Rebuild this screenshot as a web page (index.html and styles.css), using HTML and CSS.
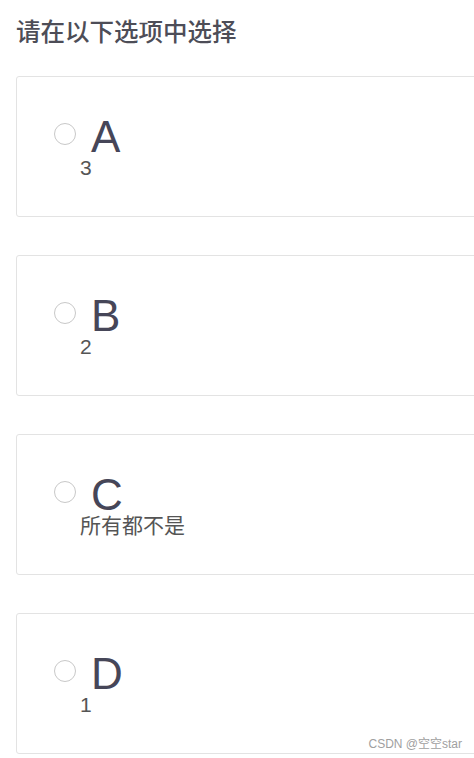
FILE: index.html
```html
<!DOCTYPE html>
<html lang="zh">
<head>
  <meta charset="UTF-8" />
  <meta name="viewport" content="width=device-width, initial-scale=1.0" />
  <title>选择</title>
  <link rel="stylesheet" href="styles.css">
</head>
<body>

  <h2 class="titolo">请在以下选项中选择</h2>

  <div class="lista">
    <label class="opzione">
      <div class="riga">
        <span class="radio"></span>
        <span class="lettera">A</span>
      </div>
      <div class="testo">3</div>
    </label>

    <label class="opzione">
      <div class="riga">
        <span class="radio"></span>
        <span class="lettera">B</span>
      </div>
      <div class="testo">2</div>
    </label>

    <label class="opzione">
      <div class="riga">
        <span class="radio"></span>
        <span class="lettera">C</span>
      </div>
      <div class="testo">所有都不是</div>
    </label>

    <label class="opzione">
      <div class="riga">
        <span class="radio"></span>
        <span class="lettera">D</span>
      </div>
      <div class="testo">1</div>
    </label>
  </div>

  <div class="filigrana">CSDN @空空star</div>

</body>
</html>
```

FILE: styles.css
```css
body {
  margin: 0;
  padding: 0 0 0 16px;
  background: #fff;
  font-family: "Liberation Sans", "Noto Sans CJK SC", sans-serif;
  color: #4b4b5a;
  overflow: hidden;
  height: 758px;
  position: relative;
}

.titolo {
  margin: 16px 0 26px;
  font-size: 24.5px;
  line-height: 34px;
  font-weight: 500;
  color: #4d4d57;
}

.lista {
  display: flex;
  flex-direction: column;
  gap: 38px;
}

.opzione {
  display: block;
  box-sizing: border-box;
  width: 480px;
  height: 141px;
  border: 1px solid #e3e3e3;
  border-radius: 3px;
  padding: 40px 0 0 37px;
  cursor: pointer;
}

.riga {
  display: flex;
  align-items: flex-start;
}

.radio {
  width: 20px;
  height: 20px;
  border: 1.5px solid #c8c8c8;
  border-radius: 50%;
  margin-top: 6px;
  flex-shrink: 0;
}

.lettera {
  margin-left: 15px;
  font-size: 44px;
  line-height: 40px;
  color: #464658;
}

.testo {
  margin-left: 26px;
  font-size: 21px;
  line-height: 22px;
  color: #555;
}

.filigrana {
  position: absolute;
  right: 12px;
  top: 736px;
  font-size: 12px;
  line-height: 16px;
  color: #a0a0a0;
}
```
